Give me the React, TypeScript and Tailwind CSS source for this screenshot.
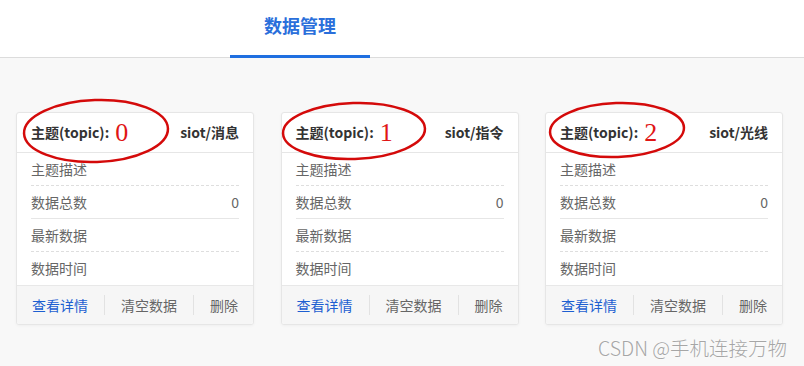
const cards = [
  { topic: 'siot/消息', mark: '0' },
  { topic: 'siot/指令', mark: '1' },
  { topic: 'siot/光线', mark: '2' },
];

const rows = [
  { label: '主题描述', value: '', line: 'border-dashed' },
  { label: '数据总数', value: '0', line: 'border-solid' },
  { label: '最新数据', value: '', line: 'border-dashed' },
  { label: '数据时间', value: '', line: 'none' },
];

function TopicCard({ topic, mark }: { topic: string; mark: string }) {
  return (
    <div className="w-[238px] rounded-[3px] border border-[#e6e6e6] bg-white shadow-[0_1px_3px_rgba(0,0,0,0.04)] overflow-hidden">
      {/* Header */}
      <div className="flex h-[40px] items-center justify-between border-b border-[#e6e6e6] px-[14px] text-[14px] font-bold text-[#333]">
        <div className="flex items-center">
          <span>主题(topic):</span>
          <span className="ml-[6px] font-['Liberation_Serif',serif] text-[26px] font-normal leading-none text-[#e01515]">
            {mark}
          </span>
        </div>
        <span>{topic}</span>
      </div>

      {/* Rows */}
      <div className="px-[14px]">
        {rows.map((r) => (
          <div
            key={r.label}
            className={
              r.line === 'none'
                ? 'flex h-[33px] items-center justify-between text-[14px] text-[#666]'
                : r.line === 'border-dashed'
                ? 'flex h-[33px] items-center justify-between border-b border-dashed border-[#dedede] text-[14px] text-[#666]'
                : 'flex h-[33px] items-center justify-between border-b border-solid border-[#e6e6e6] text-[14px] text-[#666]'
            }
          >
            <span>{r.label}</span>
            <span>{r.value}</span>
          </div>
        ))}
      </div>

      {/* Footer actions */}
      <div className="flex h-[39px] items-center justify-between border-t border-[#e8e8e8] bg-[#f6f6f6] px-[15px] text-[14px] text-[#666]">
        <span className="text-[#1d5fd1]">查看详情</span>
        <span className="h-[20px] w-px bg-[#e2e2e2]" />
        <span>清空数据</span>
        <span className="h-[20px] w-px bg-[#e2e2e2]" />
        <span>删除</span>
      </div>
    </div>
  );
}

export default function App() {
  return (
    <div className="relative h-[366px] w-[804px] overflow-hidden bg-[#f8f8f8] font-['Noto_Sans_CJK_SC','Noto_Sans',sans-serif]">
      {/* Tab bar */}
      <div className="h-[58px] border-b border-[#dcdcdc] bg-white">
        <div className="ml-[230px] flex h-[58px] w-[140px] justify-center border-b-[3px] border-[#1f6fe0] pt-[13px]">
          <span className="text-[18px] font-bold leading-[24px] text-[#2a6fdb]">数据管理</span>
        </div>
      </div>

      {/* Cards */}
      <div className="flex gap-[26.5px] pl-[16px] pt-[54px]">
        {cards.map((c) => (
          <TopicCard key={c.topic} topic={c.topic} mark={c.mark} />
        ))}
      </div>

      {/* Hand-drawn annotation rings */}
      <svg
        className="pointer-events-none absolute left-0 top-0"
        width="804"
        height="366"
        viewBox="0 0 804 366"
      >
        <g fill="none" stroke="#d40a0a" strokeWidth="2.5">
          <ellipse cx="96" cy="131" rx="72" ry="31" transform="rotate(-2 96 131)" />
          <ellipse cx="354" cy="131" rx="71" ry="28" transform="rotate(-2 354 131)" />
          <ellipse cx="617" cy="130" rx="67" ry="27" transform="rotate(-2 617 130)" />
        </g>
      </svg>

      {/* Watermark */}
      <div className="pointer-events-none absolute left-[598px] top-[335px] whitespace-nowrap text-[19.5px] font-light leading-[26px] text-[#a6a6a6] [text-shadow:0_0_2px_#ffffff]">
        CSDN @手机连接万物
      </div>
    </div>
  );
}
